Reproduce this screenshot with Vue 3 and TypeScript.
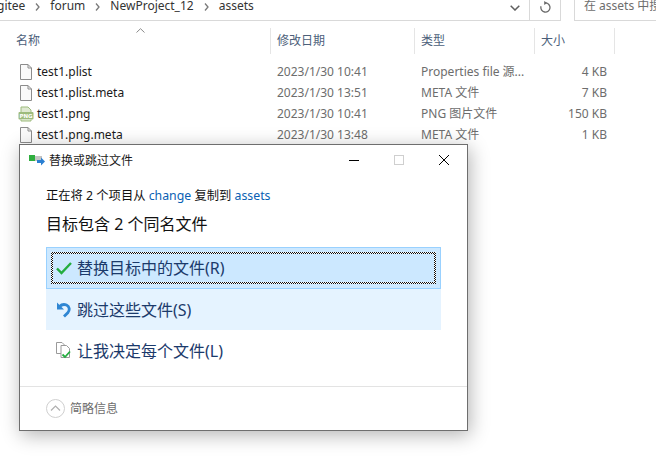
<script setup lang="ts">
interface FileRow {
  name: string
  date: string
  type: string
  size: string
  png?: boolean
}

const crumbs = ['forum', 'NewProject_12', 'assets']

const files: FileRow[] = [
  { name: 'test1.plist', date: '2023/1/30 10:41', type: 'Properties file 源...', size: '4 KB' },
  { name: 'test1.plist.meta', date: '2023/1/30 13:51', type: 'META 文件', size: '7 KB' },
  { name: 'test1.png', date: '2023/1/30 10:41', type: 'PNG 图片文件', size: '150 KB', png: true },
  { name: 'test1.png.meta', date: '2023/1/30 13:48', type: 'META 文件', size: '1 KB' }
]
</script>

<template>
  <div class="page">
    <div class="toolbar">
      <div class="address">
        <span class="crumb first">gitee</span>
        <template v-for="c in crumbs" :key="c">
          <svg class="sep" width="5" height="8" viewBox="0 0 5 8"><path d="M1 0.5 L4 4 L1 7.5" fill="none" stroke="#7a7a7a" stroke-width="1.3" /></svg>
          <span class="crumb">{{ c }}</span>
        </template>
        <svg class="chevron" width="10" height="6" viewBox="0 0 10 6"><path d="M0.7 0.7 L5 5 L9.3 0.7" fill="none" stroke="#5f5f5f" stroke-width="1.5" /></svg>
        <div class="refresh">
          <svg width="12" height="13" viewBox="0 0 12 13"><path d="M6.5 1.9 A4.6 4.6 0 1 1 2 5.2" fill="none" stroke="#6a6a6a" stroke-width="1.3" /><path d="M5.2 0 L8.2 2 L5.2 4 Z" fill="#6a6a6a" /></svg>
        </div>
      </div>
      <div class="search">在 assets 中搜索</div>
    </div>

    <div class="columns">
      <div class="col col-name">名称
        <svg class="sort" width="9" height="5" viewBox="0 0 9 5"><path d="M0.5 4.5 L4.5 0.7 L8.5 4.5" fill="none" stroke="#8a8a8a" /></svg>
      </div>
      <div class="col col-date">修改日期</div>
      <div class="col col-type">类型</div>
      <div class="col col-size">大小</div>
    </div>

    <div class="rows">
      <div v-for="f in files" :key="f.name" class="row">
        <span class="name">
          <svg v-if="f.png" class="ficon" width="16" height="16" viewBox="0 0 16 16">
            <path d="M3 6 V1 H10 L13 4 V6" fill="#dfe9d2" stroke="#9dbb7c" />
            <rect x="0.5" y="6" width="15" height="7.5" rx="1" fill="#9dbb7c" />
            <path d="M3 13.5 V15 H13 V13.5" fill="#dfe9d2" stroke="#9dbb7c" />
            <text x="8" y="12" class="png-label">PNG</text>
          </svg>
          <svg v-else class="ficon" width="16" height="16" viewBox="0 0 16 16">
            <path d="M2.5 0.5 H10 L13.5 4 V15.5 H2.5 Z" fill="#fafafa" stroke="#8c8c8c" />
            <path d="M10 0.5 V4 H13.5" fill="none" stroke="#8c8c8c" />
          </svg>
          {{ f.name }}
        </span>
        <span class="cell date">{{ f.date }}</span>
        <span class="cell type">{{ f.type }}</span>
        <span class="cell size">{{ f.size }}</span>
      </div>
    </div>

    <div class="dialog">
      <div class="titlebar">
        <svg class="title-icon" width="16" height="11" viewBox="0 0 16 11">
          <rect x="0" y="0" width="6" height="6" fill="#2fae3f" />
          <rect x="6" y="1" width="7" height="5" fill="#c4c4c4" />
          <path d="M8 5 H12 V2.6 L16 6.5 L12 10.4 V8 H8 Z" fill="#2a7fd2" />
        </svg>
        <span class="title">替换或跳过文件</span>
        <div class="win-btns">
          <svg width="10" height="10" viewBox="0 0 10 10"><path d="M0 5.5 H10" stroke="#000" /></svg>
          <svg width="10" height="10" viewBox="0 0 10 10"><rect x="0.5" y="0.5" width="9" height="9" fill="none" stroke="#cfcfcf" /></svg>
          <svg width="10" height="10" viewBox="0 0 10 10"><path d="M0 0 L10 10 M10 0 L0 10" stroke="#000" stroke-width="1" /></svg>
        </div>
      </div>

      <div class="body">
        <p class="progress">正在将 2 个项目从 <a>change</a> 复制到 <a>assets</a></p>
        <h1 class="heading">目标包含 2 个同名文件</h1>

        <div class="options">
          <div class="option selected">
            <div class="focus">
              <svg class="oicon" width="16" height="14" viewBox="0 0 16 14"><path d="M1 7.5 L5.5 12 L15 2" fill="none" stroke="#23ad3f" stroke-width="2.4" /></svg>
              <span class="label">替换目标中的文件(R)</span>
            </div>
          </div>
          <div class="option hover">
            <div class="plain">
              <svg class="oicon" width="16" height="16" viewBox="0 0 16 16">
                <path d="M1 0.5 V7.5 H8 Z" fill="#2f86d3" />
                <path d="M3.5 4.5 C5.5 2.5 8 2 10.5 3 C13.5 4.3 14 8 12 10.5 L8 14.5" fill="none" stroke="#2f86d3" stroke-width="2.8" />
              </svg>
              <span class="label">跳过这些文件(S)</span>
            </div>
          </div>
          <div class="option">
            <div class="plain">
              <svg class="oicon" width="16" height="17" viewBox="0 0 16 17">
                <path d="M0.5 0.5 H6 L8.5 3 V11.5 H0.5 Z" fill="#fff" stroke="#9a9a9a" />
                <path d="M5 3.5 H10.5 L13.5 6.5 V15.5 H5 Z" fill="#fff" stroke="#9a9a9a" />
                <path d="M6.5 12.5 L9 15 L14 9.5" fill="none" stroke="#23ad3f" stroke-width="1.8" />
              </svg>
              <span class="label">让我决定每个文件(L)</span>
            </div>
          </div>
        </div>
      </div>

      <div class="footer">
        <svg width="19" height="19" viewBox="0 0 19 19">
          <circle cx="9.5" cy="9.5" r="9" fill="#fff" stroke="#cfcfcf" />
          <path d="M5 11.5 L9.5 7 L14 11.5" fill="none" stroke="#b0b0b0" stroke-width="1.2" />
        </svg>
        <span class="footer-text">简略信息</span>
      </div>
    </div>
  </div>
</template>

<style>
html,
body {
  margin: 0;
  background: #fff;
}
</style>

<style scoped>
.page {
  position: relative;
  width: 656px;
  height: 457px;
  overflow: hidden;
  background: #fff;
  font-family: "Noto Sans", "Noto Sans CJK SC", sans-serif;
  font-size: 12px;
  color: #1a1a1a;
}
.toolbar {
  display: flex;
  gap: 13px;
  height: 21px;
}
.address {
  display: flex;
  align-items: center;
  width: 561px;
  box-sizing: border-box;
  border-bottom: 1px solid #d9d9d9;
  border-right: 1px solid #d9d9d9;
}
.crumb {
  line-height: 11px;
  height: 11px;
  margin-top: -10px;
  font-size: 12px;
  color: #333;
}
.crumb.first {
  margin-left: -3px;
}
.sep {
  margin: -6px 10px 0 10px;
}
.chevron {
  margin: -5px 0 0 auto;
}
.refresh {
  display: flex;
  align-items: center;
  justify-content: center;
  width: 31px;
  height: 100%;
  margin-left: 9px;
  border-left: 1px solid #d9d9d9;
  box-sizing: border-box;
  padding-bottom: 6px;
}
.search {
  flex: 1;
  box-sizing: border-box;
  padding-left: 9px;
  border: 1px solid #d9d9d9;
  border-top: 0;
  border-right: 0;
  line-height: 12px;
  color: #6d6d6d;
  white-space: nowrap;
  overflow: hidden;
}
.columns {
  display: grid;
  grid-template-columns: 271px 144px 120px 80px;
  margin-top: 7px;
  height: 26px;
}
.col {
  position: relative;
  box-sizing: border-box;
  padding-left: 6px;
  border-right: 1px solid #e5e5e5;
  line-height: 26px;
  color: #4c607a;
}
.col-name {
  padding-left: 16px;
}
.sort {
  position: absolute;
  top: 0;
  left: 136px;
}
.rows {
  margin-top: 7px;
}
.row {
  display: grid;
  grid-template-columns: 271px 144px 120px 80px;
  height: 21px;
  line-height: 21px;
}
.name {
  display: flex;
  align-items: center;
  gap: 3px;
  padding-left: 18px;
}
.ficon {
  flex: none;
}
.png-label {
  font-family: "DejaVu Sans", sans-serif;
  font-size: 5.5px;
  font-weight: 700;
  fill: #fff;
  text-anchor: middle;
}
.cell {
  padding-left: 6px;
  color: #6d6d6d;
  white-space: nowrap;
}
.size {
  padding: 0 8px 0 0;
  text-align: right;
}
.dialog {
  position: absolute;
  left: 19px;
  top: 144px;
  display: flex;
  flex-direction: column;
  box-sizing: border-box;
  width: 449px;
  height: 287px;
  background: #fff;
  border: 1px solid #6e6e6e;
  box-shadow: 2px 4px 18px rgba(0, 0, 0, 0.3);
}
.titlebar {
  display: flex;
  align-items: center;
  height: 30px;
  padding-left: 9px;
}
.title-icon {
  margin-right: 4px;
}
.title {
  color: #1a1a1a;
}
.win-btns {
  display: flex;
  gap: 35px;
  margin-left: auto;
  margin-right: 18px;
}
.body {
  flex: 1;
  padding: 0 26px;
}
.progress {
  margin: 12px 0 0;
  font-size: 12.3px;
  line-height: 17px;
  color: #111;
}
.progress a {
  color: #0a5fb4;
}
.heading {
  margin: 8px 0 0;
  font-size: 16px;
  font-weight: 400;
  line-height: 24px;
  color: #111;
}
.options {
  display: flex;
  flex-direction: column;
  margin-top: 11px;
  width: 395px;
}
.option {
  box-sizing: border-box;
  height: 41px;
  font-size: 16px;
  color: #1b3a6b;
}
.option.selected {
  height: 42px;
  padding: 4px;
  background: #cce8ff;
  border: 1px solid #99d1ff;
}
.option.hover {
  background: #e5f3ff;
}
.focus {
  display: flex;
  align-items: center;
  gap: 5px;
  box-sizing: border-box;
  height: 100%;
  padding-left: 3px;
  border: 2px solid transparent;
  background:
    linear-gradient(#cce8ff, #cce8ff) padding-box,
    repeating-conic-gradient(#111 0 25%, #fff 0 50%) 0 0 / 2px 2px border-box;
}
.plain {
  display: flex;
  align-items: center;
  gap: 5px;
  height: 100%;
  padding-left: 10px;
}
.label {
  margin-bottom: 2px;
}
.footer {
  display: flex;
  align-items: center;
  gap: 5px;
  height: 43px;
  padding-left: 26px;
  border-top: 1px solid #e3e3e3;
  color: #6d6d6d;
}
.footer-text {
  margin-bottom: 2px;
}
</style>
